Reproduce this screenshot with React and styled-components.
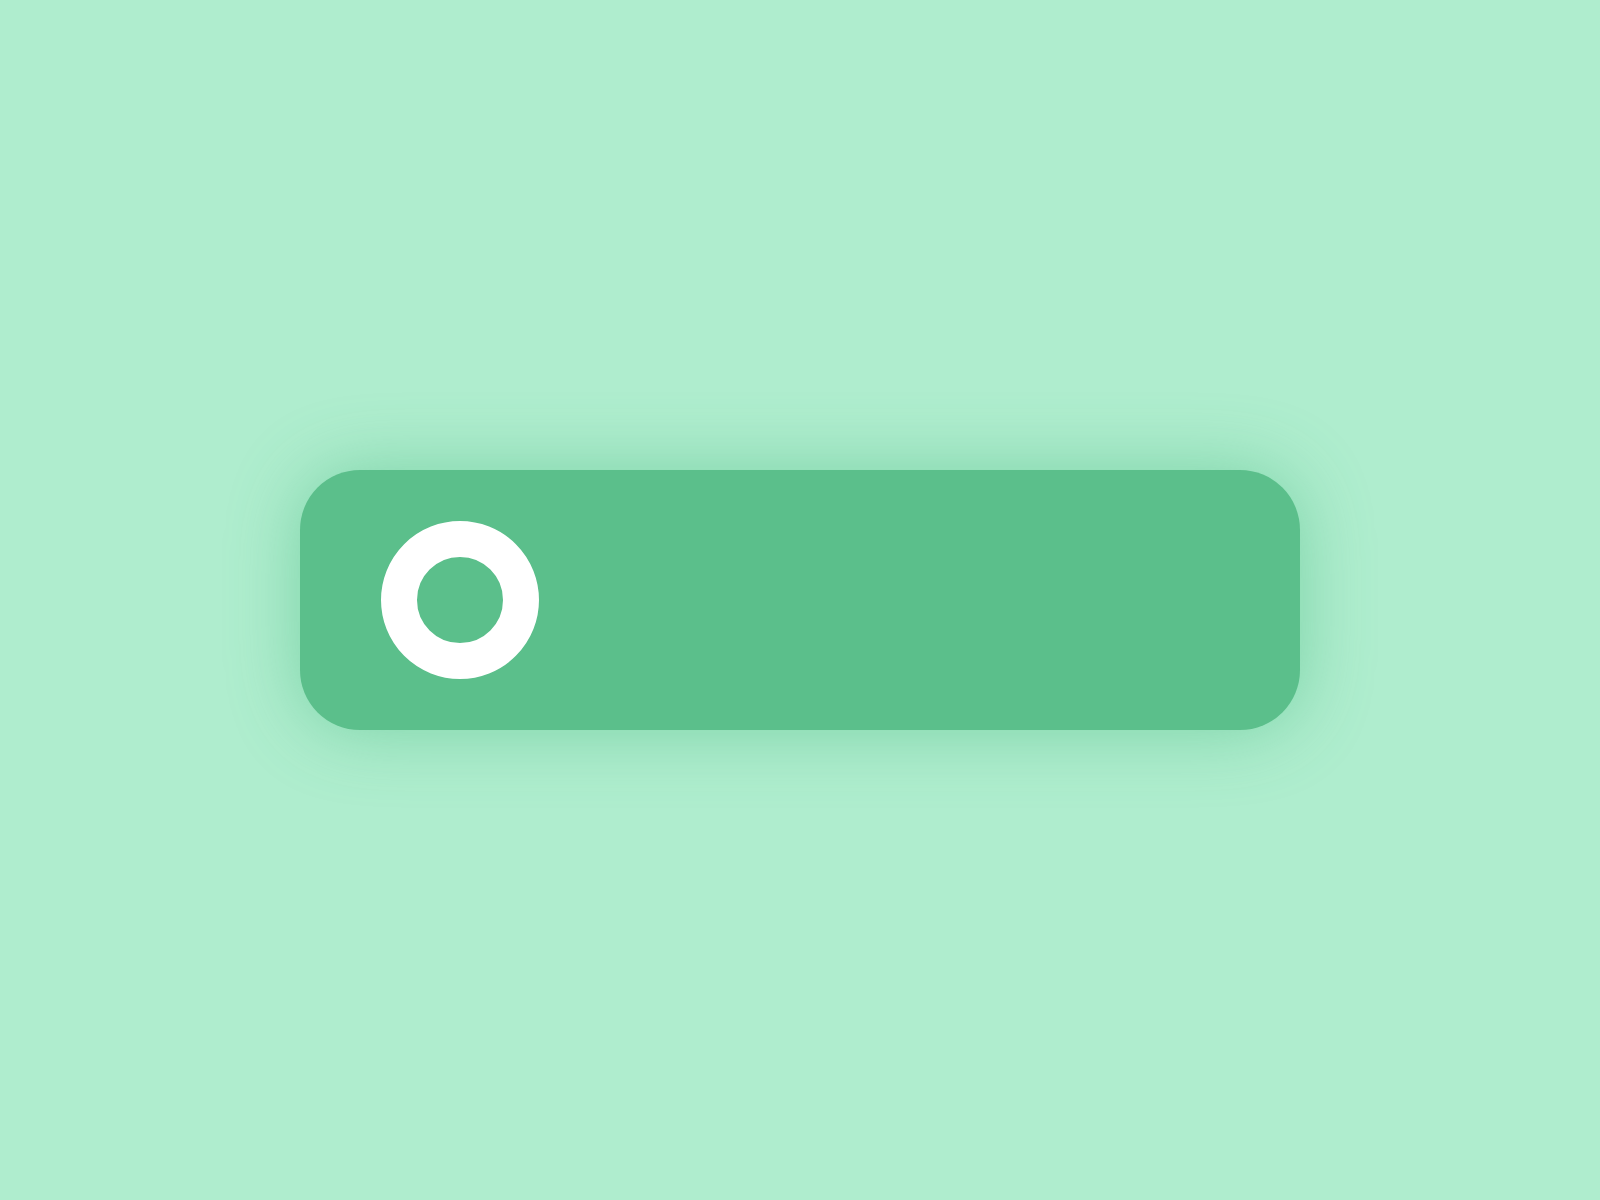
import React from 'react'
import styled, { createGlobalStyle } from 'styled-components'

const GlobalStyle = createGlobalStyle`
  html, body {
    margin: 0;
    padding: 0;
    background: #afedce;
    font-family: "Liberation Sans", Arial, sans-serif;
  }
`

const Page = styled.div`
  width: 100vw;
  height: 100vh;
  display: flex;
  align-items: center;
  justify-content: center;
  background: #afedce;
`

const Panel = styled.div`
  box-sizing: border-box;
  width: 1000px;
  height: 260px;
  padding: 0 81px;
  display: flex;
  align-items: center;
  background: #5bbf8b;
  border-radius: 60px;
  box-shadow: 0 0 70px rgba(60, 180, 120, 0.45);
`

const Ring = styled.div`
  box-sizing: border-box;
  width: 158px;
  height: 158px;
  border-radius: 50%;
  border: 36px solid #ffffff;
  flex-shrink: 0;
`

const App = () => (
  <>
    <GlobalStyle />
    <Page>
      <Panel>
        <Ring />
      </Panel>
    </Page>
  </>
)

export default App
